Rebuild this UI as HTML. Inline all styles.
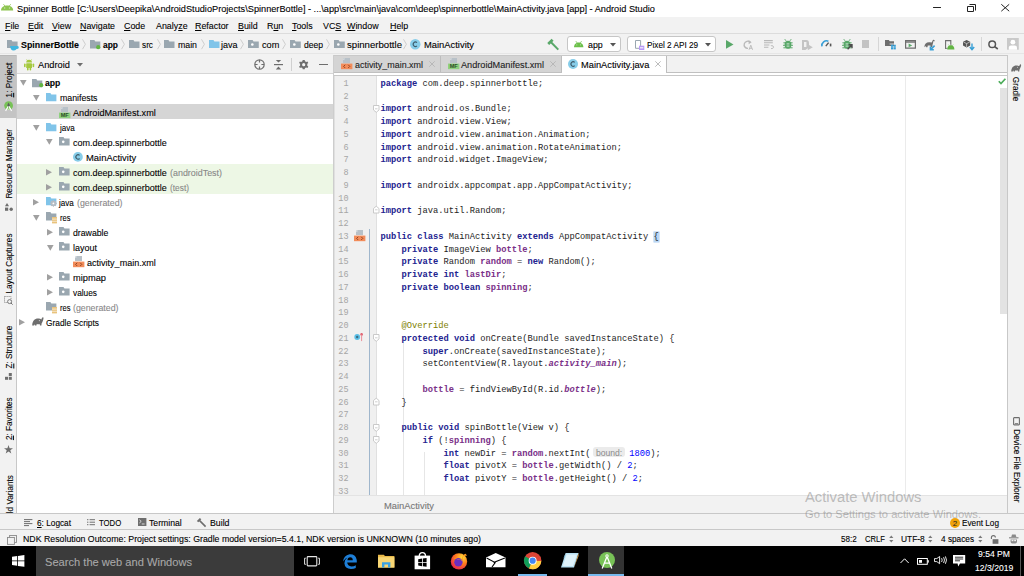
<!DOCTYPE html>
<html><head><meta charset="utf-8"><style>
*{margin:0;padding:0;box-sizing:border-box}
html,body{width:1024px;height:576px;overflow:hidden;background:#f2f2f2;font-family:"Liberation Sans",sans-serif;font-size:9px;color:#000}
.t{position:absolute;white-space:nowrap;z-index:2;-webkit-text-stroke:0.1px currentColor}
.r{position:absolute;display:block}
.k{color:#23238f;font-weight:bold}
.f{color:#7a3088;font-weight:bold}
.fi{color:#7a3088;font-weight:bold;font-style:italic}
.n{color:#0000ff}
.an{color:#808000}
.u{text-decoration:underline;text-underline-offset:1px}
.hint{font-family:'Liberation Sans',sans-serif;font-weight:normal;font-size:8.6px;line-height:6px;color:#8c8c8c;background:#ebebeb;border-radius:3px;padding:0.5px 2.5px 0 3px;margin:0 4.5px 0 2.4px;position:relative;top:-1px}
</style></head><body>
<div class="r" style="left:0px;top:0px;width:1024px;height:17px;background:#fff;"></div>
<div class="r" style="left:0px;top:17px;width:1024px;height:16px;background:#f2f2f2;"></div>
<div class="r" style="left:0px;top:33px;width:1024px;height:1px;background:#dcdcdc;"></div>
<div class="r" style="left:0px;top:34px;width:1024px;height:21px;background:#f2f2f2;"></div>
<div class="r" style="left:0px;top:53px;width:1024px;height:1px;background:#e6e6e6;"></div>
<div class="r" style="left:0px;top:55px;width:16px;height:459px;background:#f2f2f2;"></div>
<div class="r" style="left:16px;top:55px;width:1px;height:459px;background:#c8c8c8;"></div>
<div class="r" style="left:0px;top:55px;width:16px;height:63px;background:#c4c4c4;"></div>
<div class="r" style="left:0px;top:55px;width:16px;height:1px;background:#b8b8b8;"></div>
<div class="r" style="left:1008px;top:55px;width:16px;height:459px;background:#f2f2f2;"></div>
<div class="r" style="left:1007px;top:55px;width:1px;height:459px;background:#c8c8c8;"></div>
<div class="r" style="left:17px;top:55px;width:316px;height:459px;background:#fff;"></div>
<div class="r" style="left:333px;top:55px;width:1px;height:459px;background:#cdcdcd;"></div>
<div class="r" style="left:17px;top:55px;width:316px;height:18px;background:#f2f2f2;"></div>
<div class="r" style="left:17px;top:73px;width:316px;height:1px;background:#d6d6d6;"></div>
<div class="r" style="left:17px;top:104px;width:316px;height:15px;background:#d5d5d5;"></div>
<div class="r" style="left:17px;top:164px;width:316px;height:30px;background:#edf7e5;"></div>
<div class="r" style="left:334px;top:55px;width:673px;height:17px;background:#f2f2f2;"></div>
<div class="r" style="left:334px;top:55px;width:106px;height:17px;background:#d4d4d4;"></div>
<div class="r" style="left:440px;top:55px;width:1px;height:17px;background:#bdbdbd;"></div>
<div class="r" style="left:441px;top:55px;width:120px;height:17px;background:#d4d4d4;"></div>
<div class="r" style="left:561px;top:55px;width:1px;height:17px;background:#bdbdbd;"></div>
<div class="r" style="left:562px;top:55px;width:104px;height:20px;background:#fff;"></div>
<div class="r" style="left:666px;top:55px;width:1px;height:17px;background:#bdbdbd;"></div>
<div class="r" style="left:334px;top:72px;width:228px;height:1px;background:#c0c0c0;"></div>
<div class="r" style="left:666px;top:72px;width:341px;height:1px;background:#c0c0c0;"></div>
<div class="r" style="left:334px;top:73px;width:228px;height:2px;background:#fff;"></div>
<div class="r" style="left:666px;top:73px;width:341px;height:2px;background:#fff;"></div>
<div class="r" style="left:334px;top:75px;width:673px;height:1px;background:#c8c8c8;"></div>
<div class="r" style="left:334px;top:55px;width:673px;height:1px;background:#c9c9c9;"></div>
<div class="r" style="left:334px;top:76px;width:673px;height:420px;background:#fff;"></div>
<div class="r" style="left:334px;top:76px;width:42px;height:420px;background:#f0f0f0;"></div>
<div class="r" style="left:334px;top:76px;width:1px;height:437px;background:#e0e0e0;"></div>
<div class="r" style="left:376px;top:76px;width:1px;height:420px;background:#e0e0e0;"></div>
<div class="r" style="left:905px;top:76px;width:1px;height:420px;background:#ebebeb;"></div>
<div class="r" style="left:1000px;top:88px;width:7px;height:226px;background:#e3e3e3;"></div>
<div class="r" style="left:369px;top:229px;width:1px;height:267px;background:#9fb6cc;"></div>
<div class="r" style="left:403px;top:342px;width:1px;height:154px;background:#e6e6e6;"></div>
<div class="r" style="left:424px;top:452px;width:1px;height:44px;background:#e6e6e6;"></div>
<div class="r" style="left:334px;top:495px;width:673px;height:1px;background:#e3e3e3;"></div>
<div class="r" style="left:334px;top:496px;width:673px;height:17px;background:#f2f2f2;"></div>
<div class="r" style="left:0px;top:513px;width:1024px;height:1px;background:#c8c8c8;"></div>
<div class="r" style="left:0px;top:514px;width:1024px;height:15px;background:#f2f2f2;"></div>
<div class="r" style="left:0px;top:529px;width:1024px;height:1px;background:#c8c8c8;"></div>
<div class="r" style="left:0px;top:530px;width:1024px;height:16px;background:#f2f2f2;"></div>
<div class="r" style="left:0px;top:546px;width:1024px;height:30px;background:#000;"></div>
<div class="r" style="left:36px;top:546px;width:258px;height:30px;background:#3b3b3b;"></div>
<div class="r" style="left:588px;top:546px;width:36px;height:30px;background:#333;"></div>
<div class="r" style="left:518px;top:574px;width:29px;height:2px;background:#76b9ed;"></div>
<div class="r" style="left:588px;top:574px;width:36px;height:2px;background:#76b9ed;"></div>
<div class="r" style="left:1020px;top:546px;width:1px;height:30px;background:#555;"></div>
<div class="t" style="left:17.00px;top:4px;font-size:9.5px;line-height:9.5px;color:#000;transform-origin:0 0;transform:scaleX(0.9668);">Spinner Bottle [C:\Users\Deepika\AndroidStudioProjects\SpinnerBottle] - ...\app\src\main\java\com\deep\spinnerbottle\MainActivity.java [app] - Android Studio</div>
<div class="t" style="left:4.50px;top:21px;font-size:9.5px;line-height:9.5px;color:#000;transform-origin:0 0;transform:scaleX(0.9340);"><span class="u">F</span>ile</div>
<div class="t" style="left:27.70px;top:21px;font-size:9.5px;line-height:9.5px;color:#000;transform-origin:0 0;transform:scaleX(0.9340);"><span class="u">E</span>dit</div>
<div class="t" style="left:52.00px;top:21px;font-size:9.5px;line-height:9.5px;color:#000;transform-origin:0 0;transform:scaleX(0.9340);"><span class="u">V</span>iew</div>
<div class="t" style="left:80.40px;top:21px;font-size:9.5px;line-height:9.5px;color:#000;transform-origin:0 0;transform:scaleX(0.9340);"><span class="u">N</span>avigate</div>
<div class="t" style="left:124.00px;top:21px;font-size:9.5px;line-height:9.5px;color:#000;transform-origin:0 0;transform:scaleX(0.9340);"><span class="u">C</span>ode</div>
<div class="t" style="left:155.50px;top:21px;font-size:9.5px;line-height:9.5px;color:#000;transform-origin:0 0;transform:scaleX(0.9340);">Analy<span class="u">z</span>e</div>
<div class="t" style="left:195.00px;top:21px;font-size:9.5px;line-height:9.5px;color:#000;transform-origin:0 0;transform:scaleX(0.9340);"><span class="u">R</span>efactor</div>
<div class="t" style="left:237.60px;top:21px;font-size:9.5px;line-height:9.5px;color:#000;transform-origin:0 0;transform:scaleX(0.9340);"><span class="u">B</span>uild</div>
<div class="t" style="left:267.00px;top:21px;font-size:9.5px;line-height:9.5px;color:#000;transform-origin:0 0;transform:scaleX(0.9340);">R<span class="u">u</span>n</div>
<div class="t" style="left:292.00px;top:21px;font-size:9.5px;line-height:9.5px;color:#000;transform-origin:0 0;transform:scaleX(0.9340);"><span class="u">T</span>ools</div>
<div class="t" style="left:322.60px;top:21px;font-size:9.5px;line-height:9.5px;color:#000;transform-origin:0 0;transform:scaleX(0.9340);">VC<span class="u">S</span></div>
<div class="t" style="left:347.30px;top:21px;font-size:9.5px;line-height:9.5px;color:#000;transform-origin:0 0;transform:scaleX(0.9340);"><span class="u">W</span>indow</div>
<div class="t" style="left:390.30px;top:21px;font-size:9.5px;line-height:9.5px;color:#000;transform-origin:0 0;transform:scaleX(0.9340);"><span class="u">H</span>elp</div>
<div class="t" style="left:21.00px;top:40px;font-size:9.5px;line-height:9.5px;color:#000;font-weight:bold;transform-origin:0 0;transform:scaleX(0.9313);">SpinnerBottle</div>
<div class="t" style="left:103.00px;top:40px;font-size:9.5px;line-height:9.5px;color:#000;font-weight:bold;transform-origin:0 0;transform:scaleX(0.8881);">app</div>
<div class="t" style="left:142.00px;top:40px;font-size:9.5px;line-height:9.5px;color:#000;transform-origin:0 0;transform:scaleX(0.8686);">src</div>
<div class="t" style="left:178.00px;top:40px;font-size:9.5px;line-height:9.5px;color:#000;transform-origin:0 0;transform:scaleX(0.9227);">main</div>
<div class="t" style="left:221.00px;top:40px;font-size:9.5px;line-height:9.5px;color:#000;transform-origin:0 0;transform:scaleX(0.9468);">java</div>
<div class="t" style="left:261.70px;top:40px;font-size:9.5px;line-height:9.5px;color:#000;transform-origin:0 0;transform:scaleX(0.9639);">com</div>
<div class="t" style="left:303.70px;top:40px;font-size:9.5px;line-height:9.5px;color:#000;transform-origin:0 0;transform:scaleX(0.9038);">deep</div>
<div class="t" style="left:347.00px;top:40px;font-size:9.5px;line-height:9.5px;color:#000;transform-origin:0 0;transform:scaleX(1.0111);">spinnerbottle</div>
<div class="t" style="left:423.60px;top:40px;font-size:9.5px;line-height:9.5px;color:#000;transform-origin:0 0;transform:scaleX(0.9866);">MainActivity</div>
<div class="t" style="left:587.80px;top:40px;font-size:9.5px;line-height:9.5px;color:#000;transform-origin:0 0;transform:scaleX(0.9274);">app</div>
<div class="t" style="left:647.40px;top:40px;font-size:9.5px;line-height:9.5px;color:#000;transform-origin:0 0;transform:scaleX(0.8647);">Pixel 2 API 29</div>
<div class="t" style="left:38.30px;top:60px;font-size:9.5px;line-height:9.5px;color:#000;transform-origin:0 0;transform:scaleX(0.9742);">Android</div>
<div class="t" style="left:45.00px;top:78px;font-size:9.5px;line-height:9.5px;color:#000;font-weight:bold;transform-origin:0 0;transform:scaleX(0.9118);">app</div>
<div class="t" style="left:59.50px;top:93px;font-size:9.5px;line-height:9.5px;color:#000;transform-origin:0 0;transform:scaleX(0.9224);">manifests</div>
<div class="t" style="left:73.00px;top:108px;font-size:9.5px;line-height:9.5px;color:#000;transform-origin:0 0;transform:scaleX(0.9621);">AndroidManifest.xml</div>
<div class="t" style="left:59.50px;top:123px;font-size:9.5px;line-height:9.5px;color:#000;transform-origin:0 0;transform:scaleX(0.8492);">java</div>
<div class="t" style="left:73.30px;top:138px;font-size:9.5px;line-height:9.5px;color:#000;transform-origin:0 0;transform:scaleX(0.9488);">com.deep.spinnerbottle</div>
<div class="t" style="left:86.20px;top:153px;font-size:9.5px;line-height:9.5px;color:#000;transform-origin:0 0;transform:scaleX(0.9906);">MainActivity</div>
<div class="t" style="left:73.30px;top:168px;font-size:9.5px;line-height:9.5px;color:#000;transform-origin:0 0;transform:scaleX(0.9488);">com.deep.spinnerbottle</div>
<div class="t" style="left:170.00px;top:168px;font-size:9.5px;line-height:9.5px;color:#888;transform-origin:0 0;transform:scaleX(0.9379);">(androidTest)</div>
<div class="t" style="left:73.30px;top:183px;font-size:9.5px;line-height:9.5px;color:#000;transform-origin:0 0;transform:scaleX(0.9488);">com.deep.spinnerbottle</div>
<div class="t" style="left:170.00px;top:183px;font-size:9.5px;line-height:9.5px;color:#888;transform-origin:0 0;transform:scaleX(0.8780);">(test)</div>
<div class="t" style="left:59.20px;top:198px;font-size:9.5px;line-height:9.5px;color:#000;transform-origin:0 0;transform:scaleX(0.8492);">java</div>
<div class="t" style="left:77.00px;top:198px;font-size:9.5px;line-height:9.5px;color:#888;transform-origin:0 0;transform:scaleX(0.9264);">(generated)</div>
<div class="t" style="left:59.50px;top:213px;font-size:9.5px;line-height:9.5px;color:#000;transform-origin:0 0;transform:scaleX(0.7956);">res</div>
<div class="t" style="left:73.00px;top:228px;font-size:9.5px;line-height:9.5px;color:#000;transform-origin:0 0;transform:scaleX(0.9182);">drawable</div>
<div class="t" style="left:73.00px;top:243px;font-size:9.5px;line-height:9.5px;color:#000;transform-origin:0 0;transform:scaleX(0.9467);">layout</div>
<div class="t" style="left:86.50px;top:258px;font-size:9.5px;line-height:9.5px;color:#000;transform-origin:0 0;transform:scaleX(0.9513);">activity_main.xml</div>
<div class="t" style="left:73.00px;top:273px;font-size:9.5px;line-height:9.5px;color:#000;transform-origin:0 0;transform:scaleX(0.9767);">mipmap</div>
<div class="t" style="left:73.00px;top:288px;font-size:9.5px;line-height:9.5px;color:#000;transform-origin:0 0;transform:scaleX(0.8740);">values</div>
<div class="t" style="left:59.50px;top:303px;font-size:9.5px;line-height:9.5px;color:#000;transform-origin:0 0;transform:scaleX(0.7956);">res</div>
<div class="t" style="left:73.00px;top:303px;font-size:9.5px;line-height:9.5px;color:#888;transform-origin:0 0;transform:scaleX(0.9264);">(generated)</div>
<div class="t" style="left:45.90px;top:318px;font-size:9.5px;line-height:9.5px;color:#000;transform-origin:0 0;transform:scaleX(0.8806);">Gradle Scripts</div>
<div class="t" style="left:355.00px;top:61px;font-size:9px;line-height:9px;color:#222;transform-origin:0 0;transform:scaleX(0.9925);">activity_main.xml</div>
<div class="t" style="left:461.00px;top:61px;font-size:9px;line-height:9px;color:#222;transform-origin:0 0;transform:scaleX(1.0180);">AndroidManifest.xml</div>
<div class="t" style="left:581.00px;top:61px;font-size:9px;line-height:9px;color:#000;transform-origin:0 0;transform:scaleX(1.0308);">MainActivity.java</div>
<div class="t" style="left:-6.00px;top:76.60px;width:32.60px;text-align:center;font-size:8.2px;line-height:8.2px;color:#000;transform:rotate(-90deg)"><span class="u">1</span>: Project</div>
<div class="t" style="left:-24.20px;top:160.40px;width:69.00px;text-align:center;font-size:8.2px;line-height:8.2px;color:#000;transform:rotate(-90deg)">Resource Manager</div>
<div class="t" style="left:-19.20px;top:260.20px;width:59.00px;text-align:center;font-size:8.2px;line-height:8.2px;color:#000;transform:rotate(-90deg)">Layout Captures</div>
<div class="t" style="left:-11.10px;top:343.30px;width:42.80px;text-align:center;font-size:8.2px;line-height:8.2px;color:#000;transform:rotate(-90deg)"><span class="u">Z</span>: Structure</div>
<div class="t" style="left:-10.70px;top:414.90px;width:42.00px;text-align:center;font-size:8.2px;line-height:8.2px;color:#000;transform:rotate(-90deg)"><span class="u">2</span>: Favorites</div>
<div class="r" style="left:0px;top:55px;width:16px;height:458px;overflow:hidden;z-index:2"><div class="t" style="left:-17.30px;top:441.40px;width:57.00px;text-align:center;font-size:8.2px;line-height:8.2px;color:#000;transform:rotate(-90deg)">Build Variants</div></div>
<div class="t" style="left:1002.45px;top:84.65px;width:26.10px;text-align:center;font-size:8.2px;line-height:8.2px;color:#000;transform:rotate(90deg)">Gradle</div>
<div class="t" style="left:979.70px;top:460.50px;width:71.60px;text-align:center;font-size:8.2px;line-height:8.2px;color:#000;transform:rotate(90deg)">Device File Explorer</div>
<div class="t" style="left:334.00px;top:80px;font-size:8.5px;line-height:8.5px;color:#a6a6a6;font-family:'Liberation Mono',monospace;-webkit-text-stroke:0;width:14.5px;text-align:right;">1</div>
<div class="t" style="left:380.50px;top:80px;font-size:8.75px;line-height:8.75px;color:#1e1e1e;font-family:'Liberation Mono',monospace;-webkit-text-stroke:0;white-space:pre;"><span class="k">package</span> com.deep.spinnerbottle;</div>
<div class="t" style="left:334.00px;top:93px;font-size:8.5px;line-height:8.5px;color:#a6a6a6;font-family:'Liberation Mono',monospace;-webkit-text-stroke:0;width:14.5px;text-align:right;">2</div>
<div class="t" style="left:334.00px;top:105px;font-size:8.5px;line-height:8.5px;color:#a6a6a6;font-family:'Liberation Mono',monospace;-webkit-text-stroke:0;width:14.5px;text-align:right;">3</div>
<div class="t" style="left:380.50px;top:105px;font-size:8.75px;line-height:8.75px;color:#1e1e1e;font-family:'Liberation Mono',monospace;-webkit-text-stroke:0;white-space:pre;"><span class="k">import</span> android.os.Bundle;</div>
<div class="t" style="left:334.00px;top:118px;font-size:8.5px;line-height:8.5px;color:#a6a6a6;font-family:'Liberation Mono',monospace;-webkit-text-stroke:0;width:14.5px;text-align:right;">4</div>
<div class="t" style="left:380.50px;top:118px;font-size:8.75px;line-height:8.75px;color:#1e1e1e;font-family:'Liberation Mono',monospace;-webkit-text-stroke:0;white-space:pre;"><span class="k">import</span> android.view.View;</div>
<div class="t" style="left:334.00px;top:131px;font-size:8.5px;line-height:8.5px;color:#a6a6a6;font-family:'Liberation Mono',monospace;-webkit-text-stroke:0;width:14.5px;text-align:right;">5</div>
<div class="t" style="left:380.50px;top:131px;font-size:8.75px;line-height:8.75px;color:#1e1e1e;font-family:'Liberation Mono',monospace;-webkit-text-stroke:0;white-space:pre;"><span class="k">import</span> android.view.animation.Animation;</div>
<div class="t" style="left:334.00px;top:144px;font-size:8.5px;line-height:8.5px;color:#a6a6a6;font-family:'Liberation Mono',monospace;-webkit-text-stroke:0;width:14.5px;text-align:right;">6</div>
<div class="t" style="left:380.50px;top:144px;font-size:8.75px;line-height:8.75px;color:#1e1e1e;font-family:'Liberation Mono',monospace;-webkit-text-stroke:0;white-space:pre;"><span class="k">import</span> android.view.animation.RotateAnimation;</div>
<div class="t" style="left:334.00px;top:156px;font-size:8.5px;line-height:8.5px;color:#a6a6a6;font-family:'Liberation Mono',monospace;-webkit-text-stroke:0;width:14.5px;text-align:right;">7</div>
<div class="t" style="left:380.50px;top:156px;font-size:8.75px;line-height:8.75px;color:#1e1e1e;font-family:'Liberation Mono',monospace;-webkit-text-stroke:0;white-space:pre;"><span class="k">import</span> android.widget.ImageView;</div>
<div class="t" style="left:334.00px;top:169px;font-size:8.5px;line-height:8.5px;color:#a6a6a6;font-family:'Liberation Mono',monospace;-webkit-text-stroke:0;width:14.5px;text-align:right;">8</div>
<div class="t" style="left:334.00px;top:182px;font-size:8.5px;line-height:8.5px;color:#a6a6a6;font-family:'Liberation Mono',monospace;-webkit-text-stroke:0;width:14.5px;text-align:right;">9</div>
<div class="t" style="left:380.50px;top:182px;font-size:8.75px;line-height:8.75px;color:#1e1e1e;font-family:'Liberation Mono',monospace;-webkit-text-stroke:0;white-space:pre;"><span class="k">import</span> androidx.appcompat.app.AppCompatActivity;</div>
<div class="t" style="left:334.00px;top:195px;font-size:8.5px;line-height:8.5px;color:#a6a6a6;font-family:'Liberation Mono',monospace;-webkit-text-stroke:0;width:14.5px;text-align:right;">10</div>
<div class="t" style="left:334.00px;top:207px;font-size:8.5px;line-height:8.5px;color:#a6a6a6;font-family:'Liberation Mono',monospace;-webkit-text-stroke:0;width:14.5px;text-align:right;">11</div>
<div class="t" style="left:380.50px;top:207px;font-size:8.75px;line-height:8.75px;color:#1e1e1e;font-family:'Liberation Mono',monospace;-webkit-text-stroke:0;white-space:pre;"><span class="k">import</span> java.util.Random;</div>
<div class="t" style="left:334.00px;top:220px;font-size:8.5px;line-height:8.5px;color:#a6a6a6;font-family:'Liberation Mono',monospace;-webkit-text-stroke:0;width:14.5px;text-align:right;">12</div>
<div class="t" style="left:334.00px;top:233px;font-size:8.5px;line-height:8.5px;color:#a6a6a6;font-family:'Liberation Mono',monospace;-webkit-text-stroke:0;width:14.5px;text-align:right;">13</div>
<div class="t" style="left:380.50px;top:233px;font-size:8.75px;line-height:8.75px;color:#1e1e1e;font-family:'Liberation Mono',monospace;-webkit-text-stroke:0;white-space:pre;"><span class="k">public class</span> MainActivity <span class="k">extends</span> AppCompatActivity <span style="background:#b9d7f5;box-shadow:0 0 0 0.5px #a8cbee">{</span></div>
<div class="t" style="left:334.00px;top:246px;font-size:8.5px;line-height:8.5px;color:#a6a6a6;font-family:'Liberation Mono',monospace;-webkit-text-stroke:0;width:14.5px;text-align:right;">14</div>
<div class="t" style="left:380.50px;top:246px;font-size:8.75px;line-height:8.75px;color:#1e1e1e;font-family:'Liberation Mono',monospace;-webkit-text-stroke:0;white-space:pre;">    <span class="k">private</span> ImageView <span class="f">bottle</span>;</div>
<div class="t" style="left:334.00px;top:258px;font-size:8.5px;line-height:8.5px;color:#a6a6a6;font-family:'Liberation Mono',monospace;-webkit-text-stroke:0;width:14.5px;text-align:right;">15</div>
<div class="t" style="left:380.50px;top:258px;font-size:8.75px;line-height:8.75px;color:#1e1e1e;font-family:'Liberation Mono',monospace;-webkit-text-stroke:0;white-space:pre;">    <span class="k">private</span> Random <span class="f">random</span> = <span class="k">new</span> Random();</div>
<div class="t" style="left:334.00px;top:271px;font-size:8.5px;line-height:8.5px;color:#a6a6a6;font-family:'Liberation Mono',monospace;-webkit-text-stroke:0;width:14.5px;text-align:right;">16</div>
<div class="t" style="left:380.50px;top:271px;font-size:8.75px;line-height:8.75px;color:#1e1e1e;font-family:'Liberation Mono',monospace;-webkit-text-stroke:0;white-space:pre;">    <span class="k">private int</span> <span class="f">lastDir</span>;</div>
<div class="t" style="left:334.00px;top:284px;font-size:8.5px;line-height:8.5px;color:#a6a6a6;font-family:'Liberation Mono',monospace;-webkit-text-stroke:0;width:14.5px;text-align:right;">17</div>
<div class="t" style="left:380.50px;top:284px;font-size:8.75px;line-height:8.75px;color:#1e1e1e;font-family:'Liberation Mono',monospace;-webkit-text-stroke:0;white-space:pre;">    <span class="k">private boolean</span> <span class="f">spinning</span>;</div>
<div class="t" style="left:334.00px;top:297px;font-size:8.5px;line-height:8.5px;color:#a6a6a6;font-family:'Liberation Mono',monospace;-webkit-text-stroke:0;width:14.5px;text-align:right;">18</div>
<div class="t" style="left:334.00px;top:309px;font-size:8.5px;line-height:8.5px;color:#a6a6a6;font-family:'Liberation Mono',monospace;-webkit-text-stroke:0;width:14.5px;text-align:right;">19</div>
<div class="t" style="left:334.00px;top:322px;font-size:8.5px;line-height:8.5px;color:#a6a6a6;font-family:'Liberation Mono',monospace;-webkit-text-stroke:0;width:14.5px;text-align:right;">20</div>
<div class="t" style="left:380.50px;top:322px;font-size:8.75px;line-height:8.75px;color:#1e1e1e;font-family:'Liberation Mono',monospace;-webkit-text-stroke:0;white-space:pre;">    <span class="an">@Override</span></div>
<div class="t" style="left:334.00px;top:335px;font-size:8.5px;line-height:8.5px;color:#a6a6a6;font-family:'Liberation Mono',monospace;-webkit-text-stroke:0;width:14.5px;text-align:right;">21</div>
<div class="t" style="left:380.50px;top:335px;font-size:8.75px;line-height:8.75px;color:#1e1e1e;font-family:'Liberation Mono',monospace;-webkit-text-stroke:0;white-space:pre;">    <span class="k">protected void</span> onCreate(Bundle savedInstanceState) {</div>
<div class="t" style="left:334.00px;top:348px;font-size:8.5px;line-height:8.5px;color:#a6a6a6;font-family:'Liberation Mono',monospace;-webkit-text-stroke:0;width:14.5px;text-align:right;">22</div>
<div class="t" style="left:380.50px;top:348px;font-size:8.75px;line-height:8.75px;color:#1e1e1e;font-family:'Liberation Mono',monospace;-webkit-text-stroke:0;white-space:pre;">        <span class="k">super</span>.onCreate(savedInstanceState);</div>
<div class="t" style="left:334.00px;top:360px;font-size:8.5px;line-height:8.5px;color:#a6a6a6;font-family:'Liberation Mono',monospace;-webkit-text-stroke:0;width:14.5px;text-align:right;">23</div>
<div class="t" style="left:380.50px;top:360px;font-size:8.75px;line-height:8.75px;color:#1e1e1e;font-family:'Liberation Mono',monospace;-webkit-text-stroke:0;white-space:pre;">        setContentView(R.layout.<span class="fi">activity_main</span>);</div>
<div class="t" style="left:334.00px;top:373px;font-size:8.5px;line-height:8.5px;color:#a6a6a6;font-family:'Liberation Mono',monospace;-webkit-text-stroke:0;width:14.5px;text-align:right;">24</div>
<div class="t" style="left:334.00px;top:386px;font-size:8.5px;line-height:8.5px;color:#a6a6a6;font-family:'Liberation Mono',monospace;-webkit-text-stroke:0;width:14.5px;text-align:right;">25</div>
<div class="t" style="left:380.50px;top:386px;font-size:8.75px;line-height:8.75px;color:#1e1e1e;font-family:'Liberation Mono',monospace;-webkit-text-stroke:0;white-space:pre;">        <span class="f">bottle</span> = findViewById(R.id.<span class="fi">bottle</span>);</div>
<div class="t" style="left:334.00px;top:399px;font-size:8.5px;line-height:8.5px;color:#a6a6a6;font-family:'Liberation Mono',monospace;-webkit-text-stroke:0;width:14.5px;text-align:right;">26</div>
<div class="t" style="left:380.50px;top:399px;font-size:8.75px;line-height:8.75px;color:#1e1e1e;font-family:'Liberation Mono',monospace;-webkit-text-stroke:0;white-space:pre;">    }</div>
<div class="t" style="left:334.00px;top:411px;font-size:8.5px;line-height:8.5px;color:#a6a6a6;font-family:'Liberation Mono',monospace;-webkit-text-stroke:0;width:14.5px;text-align:right;">27</div>
<div class="t" style="left:334.00px;top:424px;font-size:8.5px;line-height:8.5px;color:#a6a6a6;font-family:'Liberation Mono',monospace;-webkit-text-stroke:0;width:14.5px;text-align:right;">28</div>
<div class="t" style="left:380.50px;top:424px;font-size:8.75px;line-height:8.75px;color:#1e1e1e;font-family:'Liberation Mono',monospace;-webkit-text-stroke:0;white-space:pre;">    <span class="k">public void</span> spinBottle(View v) {</div>
<div class="t" style="left:334.00px;top:437px;font-size:8.5px;line-height:8.5px;color:#a6a6a6;font-family:'Liberation Mono',monospace;-webkit-text-stroke:0;width:14.5px;text-align:right;">29</div>
<div class="t" style="left:380.50px;top:437px;font-size:8.75px;line-height:8.75px;color:#1e1e1e;font-family:'Liberation Mono',monospace;-webkit-text-stroke:0;white-space:pre;">        <span class="k">if</span> (!<span class="f">spinning</span>) {</div>
<div class="t" style="left:334.00px;top:450px;font-size:8.5px;line-height:8.5px;color:#a6a6a6;font-family:'Liberation Mono',monospace;-webkit-text-stroke:0;width:14.5px;text-align:right;">30</div>
<div class="t" style="left:380.50px;top:450px;font-size:8.75px;line-height:8.75px;color:#1e1e1e;font-family:'Liberation Mono',monospace;-webkit-text-stroke:0;white-space:pre;">            <span class="k">int</span> newDir = <span class="f">random</span>.nextInt(<span class="hint">bound:</span><span class="n">1800</span>);</div>
<div class="t" style="left:334.00px;top:462px;font-size:8.5px;line-height:8.5px;color:#a6a6a6;font-family:'Liberation Mono',monospace;-webkit-text-stroke:0;width:14.5px;text-align:right;">31</div>
<div class="t" style="left:380.50px;top:462px;font-size:8.75px;line-height:8.75px;color:#1e1e1e;font-family:'Liberation Mono',monospace;-webkit-text-stroke:0;white-space:pre;">            <span class="k">float</span> pivotX = <span class="f">bottle</span>.getWidth() / <span class="n">2</span>;</div>
<div class="t" style="left:334.00px;top:475px;font-size:8.5px;line-height:8.5px;color:#a6a6a6;font-family:'Liberation Mono',monospace;-webkit-text-stroke:0;width:14.5px;text-align:right;">32</div>
<div class="t" style="left:380.50px;top:475px;font-size:8.75px;line-height:8.75px;color:#1e1e1e;font-family:'Liberation Mono',monospace;-webkit-text-stroke:0;white-space:pre;">            <span class="k">float</span> pivotY = <span class="f">bottle</span>.getHeight() / <span class="n">2</span>;</div>
<div class="t" style="left:334.00px;top:488px;font-size:8.5px;line-height:8.5px;color:#a6a6a6;font-family:'Liberation Mono',monospace;-webkit-text-stroke:0;width:14.5px;text-align:right;">33</div>
<div class="t" style="left:384.00px;top:502px;font-size:9px;line-height:9px;color:#777;transform-origin:0 0;transform:scaleX(1.0414);">MainActivity</div>
<div class="t" style="left:36.60px;top:519px;font-size:9px;line-height:9px;color:#000;transform-origin:0 0;transform:scaleX(0.9182);"><span class="u">6</span>: Logcat</div>
<div class="t" style="left:98.80px;top:519px;font-size:9px;line-height:9px;color:#000;transform-origin:0 0;transform:scaleX(0.8593);">TODO</div>
<div class="t" style="left:149.00px;top:519px;font-size:9px;line-height:9px;color:#000;transform-origin:0 0;transform:scaleX(0.9615);">Terminal</div>
<div class="t" style="left:209.80px;top:519px;font-size:9px;line-height:9px;color:#000;transform-origin:0 0;transform:scaleX(0.9744);">Build</div>
<div class="t" style="left:962.40px;top:519px;font-size:9px;line-height:9px;color:#000;transform-origin:0 0;transform:scaleX(0.9129);">Event Log</div>
<div class="t" style="left:23.20px;top:535px;font-size:9px;line-height:9px;color:#000;transform-origin:0 0;transform:scaleX(0.9746);">NDK Resolution Outcome: Project settings: Gradle model version=5.4.1, NDK version is UNKNOWN (10 minutes ago)</div>
<div class="t" style="left:841.00px;top:535px;font-size:9px;line-height:9px;color:#000;transform-origin:0 0;transform:scaleX(0.9020);">58:2</div>
<div class="t" style="left:865.40px;top:535px;font-size:9px;line-height:9px;color:#000;transform-origin:0 0;transform:scaleX(0.8467);">CRLF</div>
<div class="t" style="left:901.30px;top:535px;font-size:9px;line-height:9px;color:#000;transform-origin:0 0;transform:scaleX(0.9295);">UTF-8</div>
<div class="t" style="left:940.50px;top:535px;font-size:9px;line-height:9px;color:#000;transform-origin:0 0;transform:scaleX(0.9161);">4 spaces</div>
<div class="t" style="left:44.60px;top:557px;font-size:11.1px;line-height:11.1px;color:#a8a8a8;transform-origin:0 0;transform:scaleX(1.0016);">Search the web and Windows</div>
<div class="t" style="left:977.70px;top:550px;font-size:9px;line-height:9px;color:#fff;transform-origin:0 0;transform:scaleX(0.9547);">9:54 PM</div>
<div class="t" style="left:975.00px;top:564px;font-size:9px;line-height:9px;color:#fff;transform-origin:0 0;transform:scaleX(0.9566);">12/3/2019</div>
<div class="t" style="left:804.80px;top:490px;font-size:14.75px;line-height:14.75px;color:rgba(120,120,120,0.45);transform-origin:0 0;transform:scaleX(1.0008);">Activate Windows</div>
<div class="t" style="left:804.80px;top:509px;font-size:11.15px;line-height:11.15px;color:rgba(120,120,120,0.45);transform-origin:0 0;transform:scaleX(1.0008);">Go to Settings to activate Windows.</div>
<svg class="r" style="left:1.4px;top:4.2px;overflow:visible" width="12.2" height="6.6" viewBox="0 0 12.2 6.6"><path d="M0 6.60C0 -0.16 12.20 -0.16 12.20 6.60Z" fill="#8dc44f"/><path d="M2.44 0.2L3.90 1.98M9.76 0.2L8.30 1.98" stroke="#8dc44f" stroke-width="0.8"/><circle cx="3.66" cy="4.09" r="0.73" fill="#fff" opacity="0.55"/><circle cx="8.54" cy="4.09" r="0.73" fill="#fff" opacity="0.55"/></svg>
<svg class="r" style="left:933px;top:7px;overflow:visible" width="8" height="1.2" viewBox="0 0 8 1.2"><rect x="0" y="0" width="8" height="1" fill="#222"/></svg>
<svg class="r" style="left:966.5px;top:3.5px;overflow:visible" width="9" height="8" viewBox="0 0 9 8"><path d="M2.5 0.5H8.5V6.5M0.5 2.5H6.5V7.5H0.5Z" stroke="#222" stroke-width="1" fill="none"/><path d="M1.5 1.5" /></svg>
<svg class="r" style="left:1001px;top:3.8px;overflow:visible" width="8.5" height="7.5" viewBox="0 0 8.5 7.5"><path d="M0.3 0.3L8.2 7.2M8.2 0.3L0.3 7.2" stroke="#222" stroke-width="1" fill="none"/></svg>
<svg class="r" style="left:7.3px;top:39.9px;overflow:visible" width="10.6" height="7.9" viewBox="0 0 10.6 7.9"><path d="M0 0H4.45L5.45 1.4H10.60V7.90H0Z" fill="#9aa7b0"/></svg>
<svg class="r" style="left:10.3px;top:45.6px;overflow:visible" width="9" height="4.6" viewBox="0 0 9 4.6"><path d="M0 0H7.2Q8.8 0 8.8 1.5Q8.8 3 7.2 3H6.6Q5.4 4.6 3.3 4.6Q0.8 4.6 0 0Z" fill="#40b6e0"/></svg>
<svg class="r" style="left:82.3px;top:39.2px;overflow:visible" width="4" height="10.5" viewBox="0 0 4 10.5"><path d="M0.5 0.3L3.4 5.25L0.5 10.20" stroke="#c9c9c9" stroke-width="0.9" fill="none"/></svg>
<svg class="r" style="left:90px;top:40.2px;overflow:visible" width="10.3" height="8.4" viewBox="0 0 10.3 8.4"><path d="M0 0H4.33L5.33 1.4H10.30V8.40H0Z" fill="#9aa7b0"/></svg>
<svg class="r" style="left:96.4px;top:45.2px;overflow:visible" width="4.4" height="4.4" viewBox="0 0 4.4 4.4"><circle cx="2.2" cy="2.2" r="2.1" fill="#62b543"/></svg>
<svg class="r" style="left:121.3px;top:39.2px;overflow:visible" width="4" height="10.5" viewBox="0 0 4 10.5"><path d="M0.5 0.3L3.4 5.25L0.5 10.20" stroke="#c9c9c9" stroke-width="0.9" fill="none"/></svg>
<svg class="r" style="left:128.9px;top:40px;overflow:visible" width="10.5" height="7.9" viewBox="0 0 10.5 7.9"><path d="M0 0H4.41L5.41 1.4H10.50V7.90H0Z" fill="#9aa7b0"/></svg>
<svg class="r" style="left:156.5px;top:39.2px;overflow:visible" width="4" height="10.5" viewBox="0 0 4 10.5"><path d="M0.5 0.3L3.4 5.25L0.5 10.20" stroke="#c9c9c9" stroke-width="0.9" fill="none"/></svg>
<svg class="r" style="left:164px;top:40px;overflow:visible" width="10.5" height="7.9" viewBox="0 0 10.5 7.9"><path d="M0 0H4.41L5.41 1.4H10.50V7.90H0Z" fill="#9aa7b0"/></svg>
<svg class="r" style="left:200.5px;top:39.2px;overflow:visible" width="4" height="10.5" viewBox="0 0 4 10.5"><path d="M0.5 0.3L3.4 5.25L0.5 10.20" stroke="#c9c9c9" stroke-width="0.9" fill="none"/></svg>
<svg class="r" style="left:208.5px;top:40px;overflow:visible" width="10.5" height="7.9" viewBox="0 0 10.5 7.9"><path d="M0 0H4.41L5.41 1.4H10.50V7.90H0Z" fill="#80c4e9"/></svg>
<svg class="r" style="left:240px;top:39.2px;overflow:visible" width="4" height="10.5" viewBox="0 0 4 10.5"><path d="M0.5 0.3L3.4 5.25L0.5 10.20" stroke="#c9c9c9" stroke-width="0.9" fill="none"/></svg>
<svg class="r" style="left:247.9px;top:39.9px;overflow:visible" width="10.8" height="7.9" viewBox="0 0 10.8 7.9"><path d="M0 0H4.54L5.54 1.4H10.80V7.90H0Z" fill="#9aa7b0"/><circle cx="4.32" cy="4.58" r="1.3" fill="#fff"/></svg>
<svg class="r" style="left:282px;top:39.2px;overflow:visible" width="4" height="10.5" viewBox="0 0 4 10.5"><path d="M0.5 0.3L3.4 5.25L0.5 10.20" stroke="#c9c9c9" stroke-width="0.9" fill="none"/></svg>
<svg class="r" style="left:290px;top:39.9px;overflow:visible" width="10.8" height="7.9" viewBox="0 0 10.8 7.9"><path d="M0 0H4.54L5.54 1.4H10.80V7.90H0Z" fill="#9aa7b0"/><circle cx="4.32" cy="4.58" r="1.3" fill="#fff"/></svg>
<svg class="r" style="left:325.7px;top:39.2px;overflow:visible" width="4" height="10.5" viewBox="0 0 4 10.5"><path d="M0.5 0.3L3.4 5.25L0.5 10.20" stroke="#c9c9c9" stroke-width="0.9" fill="none"/></svg>
<svg class="r" style="left:333.5px;top:39.9px;overflow:visible" width="10.8" height="7.9" viewBox="0 0 10.8 7.9"><path d="M0 0H4.54L5.54 1.4H10.80V7.90H0Z" fill="#9aa7b0"/><circle cx="4.32" cy="4.58" r="1.3" fill="#fff"/></svg>
<svg class="r" style="left:402.6px;top:39.2px;overflow:visible" width="4" height="10.5" viewBox="0 0 4 10.5"><path d="M0.5 0.3L3.4 5.25L0.5 10.20" stroke="#c9c9c9" stroke-width="0.9" fill="none"/></svg>
<svg class="r" style="left:410px;top:39px;overflow:visible" width="10.5" height="10.5" viewBox="0 0 10.5 10.5"><circle cx="5.25" cy="5.25" r="5.25" fill="#87cde9"/><path d="M6.95 3.65A2.2 2.2 0 1 0 6.95 6.85" stroke="#3e5c6b" stroke-width="1.1" fill="none"/></svg>
<svg class="r" style="left:546.5px;top:38.5px;overflow:visible" width="12.5" height="11.5" viewBox="0 0 12.5 11.5"><path d="M1.2 5L5.6 0.8" stroke="#59a869" stroke-width="2.8"/><path d="M3.8 3L11.3 10.6" stroke="#59a869" stroke-width="2"/></svg>
<div class="r" style="left:567.3px;top:36.4px;width:54.2px;height:16px;background:#fff;border:1px solid #c6c6c6;border-radius:3px"></div>
<svg class="r" style="left:573.7px;top:40.6px;overflow:visible" width="9.4" height="6.2" viewBox="0 0 9.4 6.2"><path d="M0 6.20C0 -0.15 9.40 -0.15 9.40 6.20Z" fill="#6cc04a"/><path d="M1.88 0.2L3.01 1.86M7.52 0.2L6.39 1.86" stroke="#6cc04a" stroke-width="0.8"/><circle cx="2.82" cy="3.84" r="0.56" fill="#fff" opacity="0.55"/><circle cx="6.58" cy="3.84" r="0.56" fill="#fff" opacity="0.55"/></svg>
<svg class="r" style="left:610.3px;top:42.8px;overflow:visible" width="6" height="3.6" viewBox="0 0 6 3.6"><path d="M0 0H6L3 3.6Z" fill="#555"/></svg>
<div class="r" style="left:626.8px;top:36.4px;width:89.4px;height:16px;background:#fff;border:1px solid #c6c6c6;border-radius:3px"></div>
<svg class="r" style="left:635px;top:40px;overflow:visible" width="9.5" height="10.5" viewBox="0 0 9.5 10.5"><path d="M0.5 0.5H5.6V8.3H0.5Z" stroke="#9aa7b0" stroke-width="1" fill="none"/><rect x="4" y="5.7" width="5.3" height="4.3" fill="#b99bf8"/><rect x="5" y="7.3" width="3.3" height="1" fill="#fff"/></svg>
<svg class="r" style="left:704.5px;top:42.8px;overflow:visible" width="6" height="3.6" viewBox="0 0 6 3.6"><path d="M0 0H6L3 3.6Z" fill="#555"/></svg>
<svg class="r" style="left:726.3px;top:39.9px;overflow:visible" width="7.5" height="8.8" viewBox="0 0 7.5 8.8"><path d="M0 0L7.5 4.4L0 8.8Z" fill="#59a869"/></svg>
<svg class="r" style="left:743.9px;top:39.5px;overflow:visible" width="9.5" height="10" viewBox="0 0 9.5 10"><path d="M6.2 2.2A3.6 3.6 0 1 0 4 8.4" stroke="#b8b8b8" stroke-width="1.3" fill="none"/><path d="M4.6 0L7.6 2.2L4.6 4.2Z" fill="#b8b8b8"/><path d="M5 9.8L6.8 5.2L8.6 9.8M5.7 8.3H7.9" stroke="#b8b8b8" stroke-width="0.9" fill="none"/></svg>
<svg class="r" style="left:764px;top:40.3px;overflow:visible" width="11" height="9" viewBox="0 0 11 9"><path d="M0 0.6H8.8M0 2.8H8.8M0 5H5.4M0 7.2H4.4" stroke="#b8b8b8" stroke-width="1.1"/><path d="M6.8 5.6Q9.8 5.4 9.6 7.2Q9.4 8.8 7 8.6" stroke="#b8b8b8" stroke-width="0.9" fill="none"/></svg>
<svg class="r" style="left:783px;top:38.9px;overflow:visible" width="10" height="10.8" viewBox="0 0 10 10.8"><ellipse cx="5" cy="5.8" rx="3.4" ry="4" fill="#59a869"/><path d="M0.4 3.8H9.6M0 6.3H10M0.4 8.8H9.6M3 1.8L1.8 0.2M7 1.8L8.2 0.2" stroke="#59a869" stroke-width="1"/><rect x="3.6" y="4.4" width="2.8" height="1" fill="#fff" opacity="0.7"/><rect x="3.6" y="6.6" width="2.8" height="1" fill="#fff" opacity="0.7"/></svg>
<svg class="r" style="left:802px;top:39.8px;overflow:visible" width="11" height="10.2" viewBox="0 0 11 10.2"><path d="M0 0H4.4Q7 0 7 3V7.5L3.4 10H0Z" fill="#c4c4c4"/><path d="M5.8 4.2L10.8 7.2L5.8 10.2Z" fill="#c4c4c4"/><rect x="2" y="2" width="2.4" height="5" fill="#f2f2f2"/></svg>
<svg class="r" style="left:821.3px;top:40.3px;overflow:visible" width="11" height="6.6" viewBox="0 0 11 6.6"><path d="M0.9 6.3A4.7 4.7 0 0 1 7.4 1.2" stroke="#389fd6" stroke-width="1.6" fill="none"/><path d="M4.8 6.2L7.6 2.6" stroke="#555" stroke-width="1.4"/><path d="M9.6 3.6V6.4" stroke="#555" stroke-width="1.6"/></svg>
<svg class="r" style="left:841.9px;top:38.9px;overflow:visible" width="10" height="10.8" viewBox="0 0 10 10.8"><ellipse cx="5" cy="5.8" rx="3.4" ry="4" fill="#59a869"/><path d="M0.4 3.8H9.6M0 6.3H10M0.4 8.8H9.6M3 1.8L1.8 0.2M7 1.8L8.2 0.2" stroke="#59a869" stroke-width="1"/><rect x="3.6" y="4.4" width="2.8" height="1" fill="#fff" opacity="0.7"/><rect x="3.6" y="6.6" width="2.8" height="1" fill="#fff" opacity="0.7"/><path d="M5.6 10.2L10 5.8M6.6 5.8H10V9.2" stroke="#4d4d4d" stroke-width="1.4" fill="none"/></svg>
<div class="r" style="left:861.9px;top:40.3px;width:7.3px;height:7.4px;background:#c3c3c3;"></div>
<div class="r" style="left:878px;top:37px;width:1px;height:14px;background:#d6d6d6;"></div>
<svg class="r" style="left:885.3px;top:40.3px;overflow:visible" width="11" height="9.4" viewBox="0 0 11 9.4"><path d="M0 0H3.8L4.8 1.2H9V6H0Z" fill="#6e6e6e"/><rect x="6" y="4.6" width="2.2" height="2.2" fill="#389fd6"/><rect x="8.6" y="4.6" width="2.2" height="2.2" fill="#389fd6"/><rect x="6" y="7.2" width="2.2" height="2.2" fill="#389fd6"/><rect x="8.6" y="7.2" width="2.2" height="2.2" fill="#389fd6"/><rect x="4.6" y="3.6" width="6.4" height="0.8" fill="#f2f2f2"/></svg>
<svg class="r" style="left:904.8px;top:39.9px;overflow:visible" width="11" height="8.8" viewBox="0 0 11 8.8"><path d="M0.6 0.6H10.4V8.2H0.6Z" stroke="#6e6e6e" stroke-width="1.2" fill="none"/><path d="M0.6 2H10.4" stroke="#6e6e6e" stroke-width="1.4"/><path d="M3.6 3.6L7.2 5.4L3.6 7.2Z" fill="#59a869"/></svg>
<svg class="r" style="left:924px;top:38.8px;overflow:visible" width="11.5" height="11.8" viewBox="0 0 11.5 11.8"><path d="M0.4 8.2C0.4 4.8 2.4 3.2 5 3.2C6.4 3.2 7.2 3.6 7.8 3.2C8.6 2.4 8.4 0.8 9.6 0.8C10.6 0.8 11 1.8 10.2 2.6L9.6 2C9.1 2.2 9.4 4 8.6 5.4L8.2 8.2H6.8L6.4 6.6H3.8L3.4 8.2H2.2L2 7Z" fill="#6e6e6e"/><path d="M10.6 6.6L6.6 10.6M6.4 7.4V10.8H9.8" stroke="#389fd6" stroke-width="1.5" fill="none"/></svg>
<svg class="r" style="left:945.4px;top:39.9px;overflow:visible" width="9.5" height="9.5" viewBox="0 0 9.5 9.5"><path d="M0.6 0.6H5.8V8.4H0.6Z" stroke="#6e6e6e" stroke-width="1.1" fill="none"/><rect x="1.6" y="4.6" width="4" height="4" fill="#f2f2f2"/><path d="M2.2 9.4Q2.4 5.2 5.8 5.2Q9.2 5.2 9.4 9.4Z" fill="#62b543"/><path d="M3.4 4.6L4.2 5.6M8.2 4.6L7.4 5.6" stroke="#62b543" stroke-width="0.6"/></svg>
<svg class="r" style="left:963px;top:39.9px;overflow:visible" width="11.8" height="10.4" viewBox="0 0 11.8 10.4"><path d="M3.6 0L7.2 1.8V5.6L3.6 7.4L0 5.6V1.8Z" fill="#555"/><path d="M0.4 2L3.6 3.6L6.8 2M3.6 3.6V7" stroke="#f2f2f2" stroke-width="0.6" fill="none"/><path d="M9 3.6V9.2M6.8 7L9 9.6L11.2 7" stroke="#389fd6" stroke-width="1.4" fill="none"/></svg>
<div class="r" style="left:980.5px;top:37px;width:1px;height:14px;background:#d6d6d6;"></div>
<svg class="r" style="left:988px;top:40.4px;overflow:visible" width="11" height="9.4" viewBox="0 0 11 9.4"><circle cx="4.2" cy="4.2" r="3.3" stroke="#555" stroke-width="1.5" fill="none"/><path d="M6.6 6.6L9.8 9" stroke="#555" stroke-width="1.6"/></svg>
<svg class="r" style="left:1007px;top:38.3px;overflow:visible" width="11.8" height="11.7" viewBox="0 0 11.8 11.7"><rect width="11.8" height="11.7" fill="#c9c9c9"/><circle cx="5.9" cy="4.2" r="2.4" fill="#fff"/><path d="M1.8 11.7V9.6Q1.8 7.6 4 7.6H7.8Q10 7.6 10 9.6V11.7Z" fill="#fff"/></svg>
<svg class="r" style="left:24px;top:58.6px;overflow:visible" width="10.2" height="11.5" viewBox="0 0 10.2 11.5"><path d="M2.2 3.6A2.9 2.9 0 0 1 8 3.6Z" fill="#a5c93f"/><path d="M2.6 0.4L3.6 1.8M7.6 0.4L6.6 1.8" stroke="#a5c93f" stroke-width="0.7"/><rect x="2.2" y="4.2" width="5.8" height="4.8" rx="0.6" fill="#a5c93f"/><rect x="0" y="4.4" width="1.6" height="3.8" rx="0.8" fill="#a5c93f"/><rect x="8.6" y="4.4" width="1.6" height="3.8" rx="0.8" fill="#a5c93f"/><rect x="3" y="8" width="1.6" height="3.5" rx="0.8" fill="#a5c93f"/><rect x="5.6" y="8" width="1.6" height="3.5" rx="0.8" fill="#a5c93f"/></svg>
<svg class="r" style="left:77px;top:63px;overflow:visible" width="6" height="3.6" viewBox="0 0 6 3.6"><path d="M0 0H6L3 3.6Z" fill="#6e6e6e"/></svg>
<svg class="r" style="left:253.9px;top:58.9px;overflow:visible" width="11" height="11" viewBox="0 0 11 11"><circle cx="5.5" cy="5.5" r="4.7" stroke="#6e6e6e" stroke-width="1.2" fill="none"/><path d="M5.5 1V3.6M5.5 7.4V10M1 5.5H3.6M7.4 5.5H10" stroke="#6e6e6e" stroke-width="1.2"/></svg>
<svg class="r" style="left:274.2px;top:59.8px;overflow:visible" width="9" height="9.4" viewBox="0 0 9 9.4"><path d="M1.8 0H7.2L4.5 2.6Z" fill="#6e6e6e"/><path d="M0 4.6H9" stroke="#6e6e6e" stroke-width="1.2"/><path d="M1.8 9.4H7.2L4.5 6.6Z" fill="#6e6e6e"/></svg>
<div class="r" style="left:291px;top:58px;width:1px;height:13px;background:#d0d0d0;"></div>
<svg class="r" style="left:298.8px;top:59.6px;overflow:visible" width="9.4" height="9.4" viewBox="0 0 9.4 9.4"><g transform="translate(4.7 4.7)"><path d="M-1 -4.6H1L1.3 -3.4L2.6 -2.7L3.8 -3.3L4.6 -1.8L3.6 -1V1L4.6 1.8L3.8 3.3L2.6 2.7L1.3 3.4L1 4.6H-1L-1.3 3.4L-2.6 2.7L-3.8 3.3L-4.6 1.8L-3.6 1V-1L-4.6 -1.8L-3.8 -3.3L-2.6 -2.7L-1.3 -3.4Z" fill="#6e6e6e"/><circle r="1.6" fill="#f2f2f2"/></g></svg>
<div class="r" style="left:318.5px;top:63.8px;width:9.2px;height:1.2px;background:#6e6e6e;"></div>
<svg class="r" style="left:19.8px;top:80px;overflow:visible" width="6.6" height="5.8" viewBox="0 0 6.6 5.8"><path d="M0 0H6.6L3.3 5.8Z" fill="#a0a0a0"/></svg>
<svg class="r" style="left:31.8px;top:78.6px;overflow:visible" width="10.3" height="8.2" viewBox="0 0 10.3 8.2"><path d="M0 0H4.33L5.33 1.4H10.30V8.20H0Z" fill="#9aa7b0"/></svg>
<svg class="r" style="left:38.6px;top:83.4px;overflow:visible" width="4.4" height="4.4" viewBox="0 0 4.4 4.4"><circle cx="2.2" cy="2.2" r="2.1" fill="#62b543"/></svg>
<svg class="r" style="left:33.4px;top:94.5px;overflow:visible" width="6.6" height="5.8" viewBox="0 0 6.6 5.8"><path d="M0 0H6.6L3.3 5.8Z" fill="#a0a0a0"/></svg>
<svg class="r" style="left:45.9px;top:93px;overflow:visible" width="10.4" height="8.3" viewBox="0 0 10.4 8.3"><path d="M0 0H4.37L5.37 1.4H10.40V8.30H0Z" fill="#80c4e9"/></svg>
<svg class="r" style="left:59px;top:106.5px;overflow:visible" width="11.4" height="11.2" viewBox="0 0 11.4 11.2"><path d="M3 0H9V5H2V1Z" fill="#b8c1c8"/><path d="M2 1.6L3.4 0.2V1.6Z" fill="#fff"/><rect x="0" y="5.6" width="11.4" height="5.6" fill="#8fd17f"/><text x="5.7" y="10.5" font-family="Liberation Sans" font-weight="bold" font-size="5.6" text-anchor="middle" fill="#2d4f2a">MF</text></svg>
<svg class="r" style="left:33.4px;top:124.5px;overflow:visible" width="6.6" height="5.8" viewBox="0 0 6.6 5.8"><path d="M0 0H6.6L3.3 5.8Z" fill="#a0a0a0"/></svg>
<svg class="r" style="left:45.9px;top:123px;overflow:visible" width="10.4" height="8.3" viewBox="0 0 10.4 8.3"><path d="M0 0H4.37L5.37 1.4H10.40V8.30H0Z" fill="#80c4e9"/></svg>
<svg class="r" style="left:45.7px;top:139.3px;overflow:visible" width="6.6" height="5.8" viewBox="0 0 6.6 5.8"><path d="M0 0H6.6L3.3 5.8Z" fill="#a0a0a0"/></svg>
<svg class="r" style="left:59.2px;top:137.1px;overflow:visible" width="10.6" height="8.4" viewBox="0 0 10.6 8.4"><path d="M0 0H4.45L5.45 1.4H10.60V8.40H0Z" fill="#9aa7b0"/><circle cx="4.24" cy="4.87" r="1.3" fill="#fff"/></svg>
<svg class="r" style="left:73px;top:151.8px;overflow:visible" width="9.8" height="9.8" viewBox="0 0 9.8 9.8"><circle cx="4.9" cy="4.9" r="4.9" fill="#87cde9"/><path d="M6.60 3.30A2.2 2.2 0 1 0 6.60 6.50" stroke="#3e5c6b" stroke-width="1.1" fill="none"/></svg>
<svg class="r" style="left:46.2px;top:168.8px;overflow:visible" width="6" height="6.6" viewBox="0 0 6 6.6"><path d="M0 0L6 3.3L0 6.6Z" fill="#a0a0a0"/></svg>
<svg class="r" style="left:59.2px;top:167.1px;overflow:visible" width="10.6" height="8.4" viewBox="0 0 10.6 8.4"><path d="M0 0H4.45L5.45 1.4H10.60V8.40H0Z" fill="#9aa7b0"/><circle cx="4.24" cy="4.87" r="1.3" fill="#fff"/></svg>
<svg class="r" style="left:46.2px;top:183.8px;overflow:visible" width="6" height="6.6" viewBox="0 0 6 6.6"><path d="M0 0L6 3.3L0 6.6Z" fill="#a0a0a0"/></svg>
<svg class="r" style="left:59.2px;top:182.1px;overflow:visible" width="10.6" height="8.4" viewBox="0 0 10.6 8.4"><path d="M0 0H4.45L5.45 1.4H10.60V8.40H0Z" fill="#9aa7b0"/><circle cx="4.24" cy="4.87" r="1.3" fill="#fff"/></svg>
<svg class="r" style="left:33.4px;top:198.8px;overflow:visible" width="6" height="6.6" viewBox="0 0 6 6.6"><path d="M0 0L6 3.3L0 6.6Z" fill="#a0a0a0"/></svg>
<svg class="r" style="left:45.6px;top:197.2px;overflow:visible" width="10.4" height="8.2" viewBox="0 0 10.4 8.2"><path d="M0 0H4.37L5.37 1.4H10.40V8.20H0Z" fill="#80c4e9"/></svg>
<svg class="r" style="left:50.2px;top:200.1px;overflow:visible" width="6.8" height="6.8" viewBox="0 0 6.8 6.8"><g transform="translate(3.4 3.4)"><circle r="2.6" fill="#b4bcc4"/><path d="M0 -3.4V3.4M-3.4 0H3.4M-2.4 -2.4L2.4 2.4M2.4 -2.4L-2.4 2.4" stroke="#b4bcc4" stroke-width="1.1"/><circle r="0.9" fill="#fff"/></g></svg>
<svg class="r" style="left:33.4px;top:214.5px;overflow:visible" width="6.6" height="5.8" viewBox="0 0 6.6 5.8"><path d="M0 0H6.6L3.3 5.8Z" fill="#a0a0a0"/></svg>
<svg class="r" style="left:45.6px;top:212.1px;overflow:visible" width="10.4" height="8.4" viewBox="0 0 10.4 8.4"><path d="M0 0H4.37L5.37 1.4H10.40V8.40H0Z" fill="#9aa7b0"/></svg>
<svg class="r" style="left:52.0px;top:216.9px;overflow:visible" width="5" height="6.4" viewBox="0 0 5 6.4"><rect width="5" height="6.4" fill="#e9c37c"/><path d="M0 2.1H5M0 4.3H5" stroke="#fff" stroke-width="0.6"/></svg>
<svg class="r" style="left:46.7px;top:228.8px;overflow:visible" width="6" height="6.6" viewBox="0 0 6 6.6"><path d="M0 0L6 3.3L0 6.6Z" fill="#a0a0a0"/></svg>
<svg class="r" style="left:59.2px;top:227.1px;overflow:visible" width="10.6" height="8.4" viewBox="0 0 10.6 8.4"><path d="M0 0H4.45L5.45 1.4H10.60V8.40H0Z" fill="#9aa7b0"/><circle cx="4.24" cy="4.87" r="1.3" fill="#fff"/></svg>
<svg class="r" style="left:46.7px;top:244.5px;overflow:visible" width="6.6" height="5.8" viewBox="0 0 6.6 5.8"><path d="M0 0H6.6L3.3 5.8Z" fill="#a0a0a0"/></svg>
<svg class="r" style="left:59.2px;top:242.1px;overflow:visible" width="10.6" height="8.4" viewBox="0 0 10.6 8.4"><path d="M0 0H4.45L5.45 1.4H10.60V8.40H0Z" fill="#9aa7b0"/><circle cx="4.24" cy="4.87" r="1.3" fill="#fff"/></svg>
<svg class="r" style="left:72.9px;top:256.3px;overflow:visible" width="11.4" height="11.2" viewBox="0 0 11.4 11.2"><path d="M3 0H9V5H2V1Z" fill="#b8c1c8"/><path d="M2 1.6L3.4 0.2V1.6Z" fill="#fff"/><rect x="0" y="5.6" width="11.4" height="5.6" fill="#f28c5a"/><path d="M4.2 6.8L2.6 8.4L4.2 10M7.2 6.8L8.8 8.4L7.2 10" stroke="#8a3d1c" stroke-width="0.9" fill="none"/></svg>
<svg class="r" style="left:46.7px;top:273.8px;overflow:visible" width="6" height="6.6" viewBox="0 0 6 6.6"><path d="M0 0L6 3.3L0 6.6Z" fill="#a0a0a0"/></svg>
<svg class="r" style="left:59.2px;top:272.1px;overflow:visible" width="10.6" height="8.4" viewBox="0 0 10.6 8.4"><path d="M0 0H4.45L5.45 1.4H10.60V8.40H0Z" fill="#9aa7b0"/><circle cx="4.24" cy="4.87" r="1.3" fill="#fff"/></svg>
<svg class="r" style="left:46.7px;top:288.8px;overflow:visible" width="6" height="6.6" viewBox="0 0 6 6.6"><path d="M0 0L6 3.3L0 6.6Z" fill="#a0a0a0"/></svg>
<svg class="r" style="left:59.2px;top:287.1px;overflow:visible" width="10.6" height="8.4" viewBox="0 0 10.6 8.4"><path d="M0 0H4.45L5.45 1.4H10.60V8.40H0Z" fill="#9aa7b0"/><circle cx="4.24" cy="4.87" r="1.3" fill="#fff"/></svg>
<svg class="r" style="left:45.6px;top:302.1px;overflow:visible" width="10.4" height="8.4" viewBox="0 0 10.4 8.4"><path d="M0 0H4.37L5.37 1.4H10.40V8.40H0Z" fill="#9aa7b0"/></svg>
<svg class="r" style="left:52.0px;top:306.90000000000003px;overflow:visible" width="5" height="6.4" viewBox="0 0 5 6.4"><rect width="5" height="6.4" fill="#e9c37c"/><path d="M0 2.1H5M0 4.3H5" stroke="#fff" stroke-width="0.6"/></svg>
<svg class="r" style="left:19.4px;top:318.8px;overflow:visible" width="6" height="6.6" viewBox="0 0 6 6.6"><path d="M0 0L6 3.3L0 6.6Z" fill="#a0a0a0"/></svg>
<svg class="r" style="left:31.8px;top:317.2px;overflow:visible" width="12.0" height="8.8" viewBox="0 0 12.0 8.8"><g transform="scale(1.0)"><path d="M0.2 8.5C0.4 4 2.6 1.6 6 1.6C7.6 1.6 8.6 2 9.4 2.4C9.8 1.4 10.2 0.2 11 0.3C11.8 0.5 11.6 2 11 3.4C10.6 4.6 10 5.6 9.6 6.4L9.4 8.5H8L7.6 7C6.8 7.4 5.6 7.4 4.8 7L4.4 8.5H3L2.8 7.2L2 8.5Z" fill="#6e6e6e"/><circle cx="7.4" cy="3.6" r="0.6" fill="#fff" opacity="0.7"/></g></svg>
<svg class="r" style="left:341.3px;top:58.4px;overflow:visible" width="11.4" height="11.2" viewBox="0 0 11.4 11.2"><path d="M3 0H9V5H2V1Z" fill="#b8c1c8"/><path d="M2 1.6L3.4 0.2V1.6Z" fill="#fff"/><rect x="0" y="5.6" width="11.4" height="5.6" fill="#f28c5a"/><path d="M4.2 6.8L2.6 8.4L4.2 10M7.2 6.8L8.8 8.4L7.2 10" stroke="#8a3d1c" stroke-width="0.9" fill="none"/></svg>
<svg class="r" style="left:447.5px;top:58.4px;overflow:visible" width="11.4" height="11.2" viewBox="0 0 11.4 11.2"><path d="M3 0H9V5H2V1Z" fill="#b8c1c8"/><path d="M2 1.6L3.4 0.2V1.6Z" fill="#fff"/><rect x="0" y="5.6" width="11.4" height="5.6" fill="#8fd17f"/><text x="5.7" y="10.5" font-family="Liberation Sans" font-weight="bold" font-size="5.6" text-anchor="middle" fill="#2d4f2a">MF</text></svg>
<svg class="r" style="left:567.8px;top:58.8px;overflow:visible" width="10" height="10" viewBox="0 0 10 10"><circle cx="5.0" cy="5.0" r="5.0" fill="#87cde9"/><path d="M6.70 3.40A2.2 2.2 0 1 0 6.70 6.60" stroke="#3e5c6b" stroke-width="1.1" fill="none"/></svg>
<svg class="r" style="left:428.8px;top:60.8px;overflow:visible" width="6" height="6" viewBox="0 0 6 6"><path d="M0.3 0.3L5.7 5.7M5.7 0.3L0.3 5.7" stroke="#b4b4b4" stroke-width="0.9"/></svg>
<svg class="r" style="left:550px;top:60.8px;overflow:visible" width="6" height="6" viewBox="0 0 6 6"><path d="M0.3 0.3L5.7 5.7M5.7 0.3L0.3 5.7" stroke="#b4b4b4" stroke-width="0.9"/></svg>
<svg class="r" style="left:655px;top:60.8px;overflow:visible" width="6" height="6" viewBox="0 0 6 6"><path d="M0.3 0.3L5.7 5.7M5.7 0.3L0.3 5.7" stroke="#b4b4b4" stroke-width="0.9"/></svg>
<svg class="r" style="left:354px;top:229.6px;overflow:visible" width="11.4" height="11.2" viewBox="0 0 11.4 11.2"><path d="M3 0H9V5H2V1Z" fill="#b8c1c8"/><path d="M2 1.6L3.4 0.2V1.6Z" fill="#fff"/><rect x="0" y="5.6" width="11.4" height="5.6" fill="#f28c5a"/><path d="M4.2 6.8L2.6 8.4L4.2 10M7.2 6.8L8.8 8.4L7.2 10" stroke="#8a3d1c" stroke-width="0.9" fill="none"/></svg>
<svg class="r" style="left:373.4px;top:104.9px;overflow:visible" width="6.5" height="7.5" viewBox="0 0 6.5 7.5"><path d="M0.5 0.5H6V5L3.25 7.3L0.5 5Z" fill="#fff" stroke="#c4c4c4" stroke-width="0.9"/><path d="M2 3.8H4.5" stroke="#c4c4c4" stroke-width="0.8"/></svg>
<svg class="r" style="left:373.4px;top:206.4px;overflow:visible" width="6.5" height="7.5" viewBox="0 0 6.5 7.5"><path d="M0.5 7H6V2.5L3.25 0.2L0.5 2.5Z" fill="#fff" stroke="#c4c4c4" stroke-width="0.9"/><path d="M2 3.8H4.5" stroke="#c4c4c4" stroke-width="0.8"/></svg>
<svg class="r" style="left:373.4px;top:334.4px;overflow:visible" width="6.5" height="7.5" viewBox="0 0 6.5 7.5"><path d="M0.5 0.5H6V5L3.25 7.3L0.5 5Z" fill="#fff" stroke="#c4c4c4" stroke-width="0.9"/><path d="M2 3.8H4.5" stroke="#c4c4c4" stroke-width="0.8"/></svg>
<svg class="r" style="left:373.4px;top:397.65px;overflow:visible" width="6.5" height="7.5" viewBox="0 0 6.5 7.5"><path d="M0.5 7H6V2.5L3.25 0.2L0.5 2.5Z" fill="#fff" stroke="#c4c4c4" stroke-width="0.9"/><path d="M2 3.8H4.5" stroke="#c4c4c4" stroke-width="0.8"/></svg>
<svg class="r" style="left:373.4px;top:423.65px;overflow:visible" width="6.5" height="7.5" viewBox="0 0 6.5 7.5"><path d="M0.5 0.5H6V5L3.25 7.3L0.5 5Z" fill="#fff" stroke="#c4c4c4" stroke-width="0.9"/><path d="M2 3.8H4.5" stroke="#c4c4c4" stroke-width="0.8"/></svg>
<svg class="r" style="left:373.4px;top:436.4px;overflow:visible" width="6.5" height="7.5" viewBox="0 0 6.5 7.5"><path d="M0.5 0.5H6V5L3.25 7.3L0.5 5Z" fill="#fff" stroke="#c4c4c4" stroke-width="0.9"/><path d="M2 3.8H4.5" stroke="#c4c4c4" stroke-width="0.8"/></svg>
<svg class="r" style="left:353.5px;top:332.8px;overflow:visible" width="9" height="8.6" viewBox="0 0 9 8.6"><circle cx="3.2" cy="4" r="2.9" fill="#5bbfe6"/><circle cx="3.2" cy="4" r="1.2" fill="#3d6b80"/><circle cx="7.6" cy="1.4" r="1.3" fill="#e05a6a"/><rect x="7.1" y="1.6" width="1" height="6.5" fill="#eb8f9a"/></svg>
<svg class="r" style="left:998px;top:77.5px;overflow:visible" width="8" height="6.5" viewBox="0 0 8 6.5"><path d="M0.8 3.2L3 5.6L7.4 0.8" stroke="#4dad5b" stroke-width="1.7" fill="none"/></svg>
<svg class="r" style="left:1011px;top:63.5px;overflow:visible" width="10.56" height="7.744000000000001" viewBox="0 0 10.56 7.744000000000001"><g transform="scale(0.88)"><path d="M0.2 8.5C0.4 4 2.6 1.6 6 1.6C7.6 1.6 8.6 2 9.4 2.4C9.8 1.4 10.2 0.2 11 0.3C11.8 0.5 11.6 2 11 3.4C10.6 4.6 10 5.6 9.6 6.4L9.4 8.5H8L7.6 7C6.8 7.4 5.6 7.4 4.8 7L4.4 8.5H3L2.8 7.2L2 8.5Z" fill="#6e6e6e"/><circle cx="7.4" cy="3.6" r="0.6" fill="#fff" opacity="0.7"/></g></svg>
<svg class="r" style="left:1013px;top:416.5px;overflow:visible" width="7" height="8.5" viewBox="0 0 7 8.5"><rect x="0.6" y="0.6" width="5.8" height="7.3" rx="0.6" stroke="#6e6e6e" stroke-width="1.1" fill="none"/><rect x="1.8" y="6" width="3.4" height="0.8" fill="#6e6e6e"/></svg>
<svg class="r" style="left:4px;top:100.5px;overflow:visible" width="9.5" height="10.5" viewBox="0 0 9.5 10.5"><circle cx="4.6" cy="4.6" r="4.4" fill="#78c257"/><path d="M1.6 10L4.6 4.6L7.6 10" stroke="#fff" stroke-width="1.1" fill="none"/><path d="M2.6 7.6Q4.6 9 6.6 7.6" stroke="#fff" stroke-width="0.8" fill="none"/><path d="M4.6 1.6L6 4.4L4.6 5.8L3.2 4.4Z" fill="#5a5a5a"/></svg>
<svg class="r" style="left:4.5px;top:203px;overflow:visible" width="8" height="8" viewBox="0 0 8 8"><path d="M2 0L4 3.2H0Z" fill="#6e6e6e"/><rect x="0" y="4.6" width="3.2" height="3.2" fill="#6e6e6e"/><circle cx="6.2" cy="6.2" r="1.7" fill="#6e6e6e"/></svg>
<svg class="r" style="left:4px;top:296px;overflow:visible" width="9" height="9" viewBox="0 0 9 9"><rect x="0.5" y="0.5" width="6.5" height="6" stroke="#8a8a8a" stroke-width="0.9" fill="none" stroke-dasharray="1.2 0.8"/><circle cx="5.6" cy="5.6" r="2" stroke="#6e6e6e" stroke-width="0.9" fill="#f2f2f2"/><path d="M7 7L8.6 8.6" stroke="#6e6e6e" stroke-width="1"/></svg>
<svg class="r" style="left:5px;top:373px;overflow:visible" width="7" height="7" viewBox="0 0 7 7"><rect x="0" y="3.8" width="3" height="3" fill="#6e6e6e"/><rect x="3.8" y="3.8" width="3" height="3" fill="#6e6e6e"/><rect x="3.8" y="0" width="3" height="3" fill="#6e6e6e"/></svg>
<svg class="r" style="left:4px;top:444.5px;overflow:visible" width="9" height="9" viewBox="0 0 9 9"><path d="M4.5 0L5.6 3.3H9L6.3 5.3L7.3 8.6L4.5 6.6L1.7 8.6L2.7 5.3L0 3.3H3.4Z" fill="#6e6e6e"/></svg>
<svg class="r" style="left:24.4px;top:519px;overflow:visible" width="9" height="7" viewBox="0 0 9 7"><path d="M0 0.6H8.4M0 2.6H6M0 4.6H8.4M0 6.6H5" stroke="#6e6e6e" stroke-width="1"/></svg>
<svg class="r" style="left:87.3px;top:518.6px;overflow:visible" width="8" height="7.4" viewBox="0 0 8 7.4"><path d="M2.6 0.7H8M2.6 3.2H8M2.6 5.7H8M0 0.7H1.4M0 3.2H1.4M0 5.7H1.4" stroke="#6e6e6e" stroke-width="1"/></svg>
<svg class="r" style="left:137.8px;top:518px;overflow:visible" width="8.4" height="8" viewBox="0 0 8.4 8"><rect width="8.4" height="8" fill="#6e6e6e"/><path d="M1.4 1.8L3.2 3.4L1.4 5" stroke="#f2f2f2" stroke-width="0.8" fill="none"/><path d="M3.8 6H6.6" stroke="#f2f2f2" stroke-width="0.8"/></svg>
<svg class="r" style="left:197px;top:517.6px;overflow:visible" width="9.4" height="9.4" viewBox="0 0 9.4 9.4"><path d="M0.6 3.6L3.6 0.6" stroke="#6e6e6e" stroke-width="2"/><path d="M2.4 2.4L8.6 8.6" stroke="#6e6e6e" stroke-width="1.6"/></svg>
<svg class="r" style="left:949.5px;top:517.6px;overflow:visible" width="10" height="10" viewBox="0 0 10 10"><circle cx="5" cy="5" r="5" fill="#f0a30a"/><text x="5" y="8.1" font-family="Liberation Sans" font-size="8" text-anchor="middle" fill="#222">2</text></svg>
<svg class="r" style="left:6.8px;top:534.6px;overflow:visible" width="10" height="9.4" viewBox="0 0 10 9.4"><rect x="2.6" y="0.5" width="6.9" height="6.9" stroke="#8a8a8a" stroke-width="0.9" fill="#f2f2f2"/><rect x="0.5" y="2.5" width="6.9" height="6.9" stroke="#8a8a8a" stroke-width="0.9" fill="#f2f2f2"/></svg>
<svg class="r" style="left:888.9000000000001px;top:535px;overflow:visible" width="4.6" height="8" viewBox="0 0 4.6 8"><path d="M0.2 3.1L2.3 0.4L4.4 3.1ZM0.2 4.9L2.3 7.6L4.4 4.9Z" fill="#7a7a7a"/></svg>
<svg class="r" style="left:927.7px;top:535px;overflow:visible" width="4.6" height="8" viewBox="0 0 4.6 8"><path d="M0.2 3.1L2.3 0.4L4.4 3.1ZM0.2 4.9L2.3 7.6L4.4 4.9Z" fill="#7a7a7a"/></svg>
<svg class="r" style="left:977.5px;top:535px;overflow:visible" width="4.6" height="8" viewBox="0 0 4.6 8"><path d="M0.2 3.1L2.3 0.4L4.4 3.1ZM0.2 4.9L2.3 7.6L4.4 4.9Z" fill="#7a7a7a"/></svg>
<svg class="r" style="left:990.3px;top:534.5px;overflow:visible" width="8.5" height="9" viewBox="0 0 8.5 9"><path d="M1.4 4V2.6A2 2 0 0 1 5.4 2.6" stroke="#6e6e6e" stroke-width="1.1" fill="none"/><rect x="2.6" y="4.2" width="5.8" height="4.6" fill="#6e6e6e"/></svg>
<svg class="r" style="left:1009px;top:534px;overflow:visible" width="9.5" height="10" viewBox="0 0 9.5 10"><path d="M2.2 3.2L3 0.4H6.6L7.4 3.2Z" fill="#8a8a8a"/><rect x="0" y="3.2" width="9.5" height="1.2" fill="#8a8a8a"/><path d="M1.6 5.4H8V7.4Q8 9.6 4.8 9.6Q1.6 9.6 1.6 7.4Z" fill="#8a8a8a"/><rect x="2.6" y="5.8" width="1.8" height="1.4" fill="#f2f2f2"/><rect x="5.2" y="5.8" width="1.8" height="1.4" fill="#f2f2f2"/></svg>
<svg class="r" style="left:11.7px;top:555.2px;overflow:visible" width="12.4" height="11.8" viewBox="0 0 12.4 11.8"><path d="M0 1.7L5.2 1V5.5H0ZM6 0.9L12.4 0V5.5H6ZM0 6.3H5.2V10.8L0 10.1ZM6 6.3H12.4V11.8L6 10.9Z" fill="#fff"/></svg>
<svg class="r" style="left:303.9px;top:555.5px;overflow:visible" width="16" height="10.5" viewBox="0 0 16 10.5"><rect x="3.2" y="0.6" width="9.6" height="9.3" rx="0.8" stroke="#e6e6e6" stroke-width="1.1" fill="none"/><path d="M1.8 2.2H0.6V8.3H1.8M14.2 2.2H15.4V8.3H14.2" stroke="#e6e6e6" stroke-width="1" fill="none"/></svg>
<svg class="r" style="left:341.8px;top:553.2px;overflow:visible" width="15.2" height="16" viewBox="0 0 15.2 16"><path d="M1.2 8.6Q1.4 2.4 7.6 1.2Q13.2 0.8 14.6 6.2Q15 8 14.8 9.6H5.2Q5.6 13.2 9.4 13.4Q12 13.4 13.8 12.2V15Q11.8 16 9 16Q2.8 15.6 2.4 10.2Q2.6 6.6 5.4 4.6Q3.4 5.2 1.2 8.6ZM5.4 7.2H10.8Q10.8 4.2 8.2 4.2Q5.6 4.4 5.4 7.2Z" fill="#1e7fd8"/></svg>
<svg class="r" style="left:377.8px;top:554.2px;overflow:visible" width="16.4" height="13.6" viewBox="0 0 16.4 13.6"><path d="M0 0.8H5.8L7 2H16.4V13.6H0Z" fill="#e9b949"/><rect x="0" y="3.2" width="16.4" height="10.4" fill="#f8d775"/><path d="M4 13.6V8.2H12.4V13.6H10V10.4H6.4V13.6Z" fill="#3aa3e3"/></svg>
<svg class="r" style="left:414px;top:552px;overflow:visible" width="16.7" height="17.9" viewBox="0 0 16.7 17.9"><path d="M5.2 4.2Q5.4 0.6 8.4 0.6Q11.4 0.6 11.6 4.2" stroke="#fff" stroke-width="1.3" fill="none"/><path d="M0.6 3.6H16.1V17.3H0.6Z" fill="#fff"/><path d="M4.2 7.2L8 6.6V10H4.2ZM8.8 6.5L12.6 6V10H8.8ZM4.2 10.8H8V14.2L4.2 13.6ZM8.8 10.8H12.6V14.8L8.8 14.3Z" fill="#000"/></svg>
<svg class="r" style="left:450.2px;top:551.7px;overflow:visible" width="18" height="17.6" viewBox="0 0 18 17.6"><defs><radialGradient id="ffg" cx="0.7" cy="0.25" r="0.9"><stop offset="0" stop-color="#ffde3b"/><stop offset="0.45" stop-color="#ff7b1c"/><stop offset="1" stop-color="#e3145c"/></radialGradient></defs><circle cx="9" cy="9.4" r="8.2" fill="url(#ffg)"/><circle cx="8.4" cy="10.2" r="4.2" fill="#6b2ec2"/><path d="M3 6Q6 4.8 7.6 7.6Q10.8 6.8 12 9Q11 5.2 14.4 2.2Q16 0.6 16.8 4Q12 3 12.8 8Z" fill="#ff9a1e"/></svg>
<svg class="r" style="left:486.4px;top:553.2px;overflow:visible" width="19.5" height="14.3" viewBox="0 0 19.5 14.3"><path d="M0 4.6L9.75 0L19.5 4.6V14.3H0Z" fill="#fff"/><path d="M0.6 5L9.2 9.6L6 14M18.9 5L7.6 9.4" stroke="#000" stroke-width="1.1" fill="none"/></svg>
<svg class="r" style="left:524.4px;top:552px;overflow:visible" width="17.3" height="17.3" viewBox="0 0 17.3 17.3"><circle cx="8.65" cy="8.65" r="8.65" fill="#db4437"/><path d="M8.65 8.65L1.1 4.3A8.65 8.65 0 0 0 5 16.5Z" fill="#0f9d58"/><path d="M8.65 8.65L5 16.5A8.65 8.65 0 0 0 17.3 8.65H8.65Z" fill="#ffcd40"/><path d="M8.65 8.65H17.3A8.65 8.65 0 0 0 16.2 4.3Z" fill="#db4437"/><circle cx="8.65" cy="8.65" r="4" fill="#fff"/><circle cx="8.65" cy="8.65" r="3.1" fill="#4285f4"/></svg>
<svg class="r" style="left:560.6px;top:553px;overflow:visible" width="17.6" height="14.6" viewBox="0 0 17.6 14.6"><path d="M4.6 0H17.6L13 14.6H0Z" fill="#b8e0f2"/><path d="M5.6 1.6H16L12 13H1.8Z" fill="#dff2fa"/><path d="M13 14.6L17.6 0V3Z" fill="#e3a44a"/><path d="M4.2 1.8L3 5.2" stroke="#7fb9d4" stroke-width="0.8"/></svg>
<svg class="r" style="left:598.6px;top:551.7px;overflow:visible" width="16" height="17.1" viewBox="0 0 16 17.1"><circle cx="8" cy="8" r="8" fill="#78c257"/><path d="M3.2 16.6L8 4.6L12.8 16.6M5.4 11.2H10.6" stroke="#fff" stroke-width="1.3" fill="none"/><circle cx="8" cy="4" r="1.7" fill="#fff"/><circle cx="8" cy="4" r="0.7" fill="#78c257"/></svg>
<svg class="r" style="left:900.4px;top:558px;overflow:visible" width="9.2" height="5.4" viewBox="0 0 9.2 5.4"><path d="M0.5 5L4.6 0.8L8.7 5" stroke="#fff" stroke-width="1" fill="none"/></svg>
<svg class="r" style="left:917.3px;top:558px;overflow:visible" width="11.8" height="6.8" viewBox="0 0 11.8 6.8"><rect x="0.5" y="0.5" width="9.8" height="5.8" stroke="#fff" stroke-width="1" fill="none"/><rect x="10.6" y="2.2" width="1.2" height="2.4" fill="#fff"/><rect x="2" y="2" width="3" height="2.8" fill="#fff"/></svg>
<svg class="r" style="left:934px;top:555.8px;overflow:visible" width="13" height="8.2" viewBox="0 0 13 8.2"><path d="M0.5 2.6H2.8L5.6 0.5V7.7L2.8 5.6H0.5Z" stroke="#fff" stroke-width="0.9" fill="none"/><path d="M7.6 2.2Q8.8 4.1 7.6 6M9.6 1.2Q11.4 4.1 9.6 7M11.4 0.4Q13.6 4.1 11.4 7.8" stroke="#fff" stroke-width="0.9" fill="none"/></svg>
<svg class="r" style="left:952.9px;top:555px;overflow:visible" width="12.2" height="11.5" viewBox="0 0 12.2 11.5"><path d="M0 0H12.2V8.4H7L5.2 11.5L4.6 8.4H0Z" fill="#fff"/><path d="M2 2.2H10.2M2 4H10.2M2 5.8H7" stroke="#000" stroke-width="0.8"/></svg>
</body></html>
